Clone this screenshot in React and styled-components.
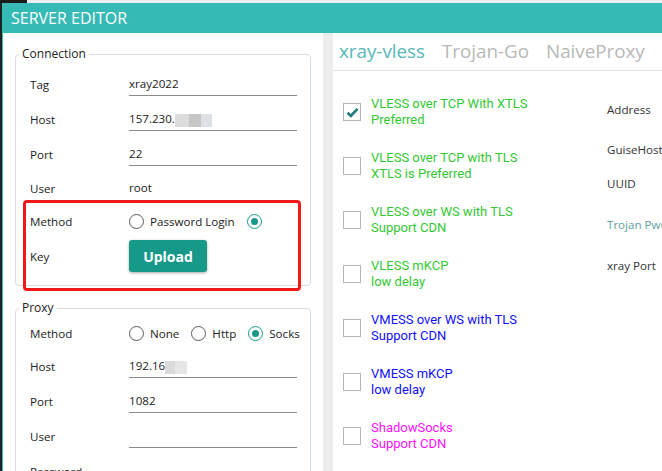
import React from 'react';
import styled, { createGlobalStyle } from 'styled-components';

const GlobalStyle = createGlobalStyle`
  html, body {
    margin: 0;
    padding: 0;
    background: #ffffff;
    overflow: hidden;
  }
  * { box-sizing: border-box; }
`;

const Screen = styled.div`
  width: 662px;
  height: 471px;
  display: flex;
  flex-direction: column;
  background: #1b2526;
  padding-left: 2px;
  font-family: 'Open Sans', 'Noto Sans', sans-serif;
  color: #222;
  overflow: hidden;
`;

const TopStrip = styled.div`
  height: 3px;
  margin-left: -2px;
  background: linear-gradient(to right, #1b1b1b 0 27px, #e8eef0 27px);
`;

const Window = styled.div`
  flex: 1;
  display: flex;
  flex-direction: column;
  border-left: 1px solid #36bab6;
  background: #ffffff;
  min-height: 0;
`;

const TitleBar = styled.div`
  height: 30px;
  background: #36bab6;
  color: #ffffff;
  font-size: 16px;
  display: flex;
  align-items: center;
  padding-left: 8px;
`;

const Body = styled.div`
  flex: 1;
  display: flex;
  min-height: 0;
`;

const LeftPane = styled.div`
  position: relative;
  width: 320px;
  flex-shrink: 0;
  padding: 13px 12px 0 12px;
  display: flex;
  flex-direction: column;
  gap: 14px;
`;

const Divider = styled.div`
  width: 10px;
  flex-shrink: 0;
  background: #ececec;
`;

const Group = styled.fieldset`
  margin: 0;
  padding: ${(p) => p.$pad || '5px 0 11px 0'};
  border: 1px solid #d4dee4;
  border-radius: 4px;
  min-width: 0;
`;

const Legend = styled.legend`
  margin-left: 3px;
  padding: 0 3px;
  font-size: 12px;
  line-height: 16px;
  color: #222;
`;

const Row = styled.div`
  display: grid;
  grid-template-columns: 99px 168px;
  align-items: center;
  height: ${(p) => p.$h || 35}px;
  padding-left: 14px;
  font-size: 11.6px;
`;

const Label = styled.div`
  color: #222;
`;

const Field = styled.div`
  height: 23px;
  line-height: 22px;
  border-bottom: ${(p) => (p.$plain ? '1px solid transparent' : '1px solid #8a8a8a')};
  color: #222;
  display: flex;
  align-items: center;
  white-space: nowrap;
`;

const Mosaic = styled.span`
  display: inline-flex;
  align-items: center;
  height: 14px;
  margin-top: 2px;
`;

const Tile = styled.span`
  display: inline-block;
  width: ${(p) => p.$w}px;
  height: 13px;
  background: ${(p) => p.$c};
`;

const Radios = styled.div`
  display: flex;
  align-items: center;
  gap: 12px;
  white-space: nowrap;
`;

const RadioOption = styled.label`
  display: flex;
  align-items: center;
  gap: 6px;
  font-size: 11.6px;
  color: #222;
`;

const RadioCircle = styled.span`
  width: 15px;
  height: 15px;
  border-radius: 50%;
  border: 1.5px solid ${(p) => (p.$on ? '#17998a' : '#5a5a5a')};
  display: flex;
  align-items: center;
  justify-content: center;
  &::after {
    content: '';
    width: 7px;
    height: 7px;
    border-radius: 50%;
    background: ${(p) => (p.$on ? '#17998a' : 'transparent')};
  }
`;

const UploadButton = styled.button`
  width: 78px;
  height: 32px;
  border: none;
  border-radius: 3px;
  background: #17998a;
  color: #ffffff;
  font-family: 'Open Sans', 'Noto Sans', sans-serif;
  font-weight: 700;
  font-size: 14px;
  box-shadow: 0 1px 3px rgba(0, 0, 0, 0.35);
  cursor: pointer;
`;

const Highlight = styled.div`
  position: absolute;
  left: 20px;
  top: 167px;
  width: 278px;
  height: 91px;
  border: 3px solid #f01818;
  border-radius: 4px;
  pointer-events: none;
`;

const RightPane = styled.div`
  flex: 1;
  display: flex;
  flex-direction: column;
  min-width: 0;
`;

const Tabs = styled.div`
  height: 38px;
  display: flex;
  align-items: center;
  gap: 17px;
  padding-left: 6px;
  border-bottom: 1px solid #e2e2e2;
  white-space: nowrap;
`;

const Tab = styled.div`
  font-size: 18.8px;
  color: ${(p) => (p.$active ? '#56b8b8' : '#b8b8b8')};
  padding-bottom: 1px;
`;

const TabBody = styled.div`
  display: flex;
`;

const OptionList = styled.div`
  width: 274px;
  flex-shrink: 0;
  padding: 14px 0 0 10px;
  display: flex;
  flex-direction: column;
`;

const Option = styled.div`
  height: 54px;
  display: flex;
  align-items: center;
  gap: 10px;
`;

const CheckBox = styled.span`
  width: 18px;
  height: 18px;
  border: 1px solid #b5b5b5;
  background: #ffffff;
  display: flex;
  align-items: center;
  justify-content: center;
  flex-shrink: 0;
`;

const OptionText = styled.div`
  font-family: Roboto, 'Noto Sans', sans-serif;
  font-size: 13px;
  line-height: 16px;
  color: ${(p) => p.$color};
`;

const FieldNames = styled.div`
  display: grid;
  grid-template-rows: 40px 34px 41px 41px 41px;
  padding-top: 31px;
  font-size: 11.6px;
  line-height: 16px;
  white-space: nowrap;
`;

const FieldName = styled.div`
  color: ${(p) => p.$color || '#333'};
`;

const GREEN = '#33c833';
const BLUE = '#1010ff';
const MAGENTA = '#ff10ff';

const options = [
  { lines: ['VLESS over TCP With XTLS', 'Preferred'], color: GREEN, checked: true },
  { lines: ['VLESS over TCP with TLS', 'XTLS is Preferred'], color: GREEN },
  { lines: ['VLESS over WS with TLS', 'Support CDN'], color: GREEN },
  { lines: ['VLESS mKCP', 'low delay'], color: GREEN },
  { lines: ['VMESS over WS with TLS', 'Support CDN'], color: BLUE },
  { lines: ['VMESS mKCP', 'low delay'], color: BLUE },
  { lines: ['ShadowSocks', 'Support CDN'], color: MAGENTA },
];

function Radio({ on, children }) {
  return (
    <RadioOption>
      <RadioCircle $on={on} />
      {children}
    </RadioOption>
  );
}

function Check({ checked }) {
  return (
    <CheckBox>
      {checked && (
        <svg width="13" height="11" viewBox="0 0 13 11">
          <path d="M1.5 5.8 L4.8 9 L11.5 1.8" fill="none" stroke="#1b7a7a" strokeWidth="2.6" />
        </svg>
      )}
    </CheckBox>
  );
}

export default function App() {
  return (
    <>
      <GlobalStyle />
      <Screen>
        <TopStrip />
        <Window>
          <TitleBar>SERVER EDITOR</TitleBar>
          <Body>
            <LeftPane>
              <Group>
                <Legend>Connection</Legend>
                <Row>
                  <Label>Tag</Label>
                  <Field>xray2022</Field>
                </Row>
                <Row>
                  <Label>Host</Label>
                  <Field>
                    157.230.
                    <Mosaic>
                      <Tile $w={14} $c="#dcdcdc" />
                      <Tile $w={12} $c="#c6c6c6" />
                      <Tile $w={11} $c="#dde0e5" />
                    </Mosaic>
                  </Field>
                </Row>
                <Row>
                  <Label>Port</Label>
                  <Field>22</Field>
                </Row>
                <Row $h={33}>
                  <Label>User</Label>
                  <Field $plain>root</Field>
                </Row>
                <Row $h={33}>
                  <Label>Method</Label>
                  <Radios>
                    <Radio>Password Login</Radio>
                    <Radio on />
                  </Radios>
                </Row>
                <Row $h={36}>
                  <Label>Key</Label>
                  <div>
                    <UploadButton>Upload</UploadButton>
                  </div>
                </Row>
              </Group>

              <Group $pad="1px 0 0 0">
                <Legend>Proxy</Legend>
                <Row $h={32}>
                  <Label>Method</Label>
                  <Radios>
                    <Radio>None</Radio>
                    <Radio>Http</Radio>
                    <Radio on>Socks</Radio>
                  </Radios>
                </Row>
                <Row>
                  <Label>Host</Label>
                  <Field>
                    192.16
                    <Mosaic>
                      <Tile $w={10} $c="#dadada" />
                      <Tile $w={12} $c="#e6e6e6" />
                    </Mosaic>
                  </Field>
                </Row>
                <Row>
                  <Label>Port</Label>
                  <Field>1082</Field>
                </Row>
                <Row>
                  <Label>User</Label>
                  <Field></Field>
                </Row>
                <Row>
                  <Label>Password</Label>
                  <Field></Field>
                </Row>
              </Group>

              <Highlight />
            </LeftPane>

            <Divider />

            <RightPane>
              <Tabs>
                <Tab $active>xray-vless</Tab>
                <Tab>Trojan-Go</Tab>
                <Tab>NaiveProxy</Tab>
              </Tabs>
              <TabBody>
                <OptionList>
                  {options.map((o) => (
                    <Option key={o.lines[0]}>
                      <Check checked={o.checked} />
                      <OptionText $color={o.color}>
                        {o.lines[0]}
                        <br />
                        {o.lines[1]}
                      </OptionText>
                    </Option>
                  ))}
                </OptionList>
                <FieldNames>
                  <FieldName>Address</FieldName>
                  <FieldName>GuiseHost</FieldName>
                  <FieldName>UUID</FieldName>
                  <FieldName $color="#5f9ea0">Trojan Pwd</FieldName>
                  <FieldName>xray Port</FieldName>
                </FieldNames>
              </TabBody>
            </RightPane>
          </Body>
        </Window>
      </Screen>
    </>
  );
}
